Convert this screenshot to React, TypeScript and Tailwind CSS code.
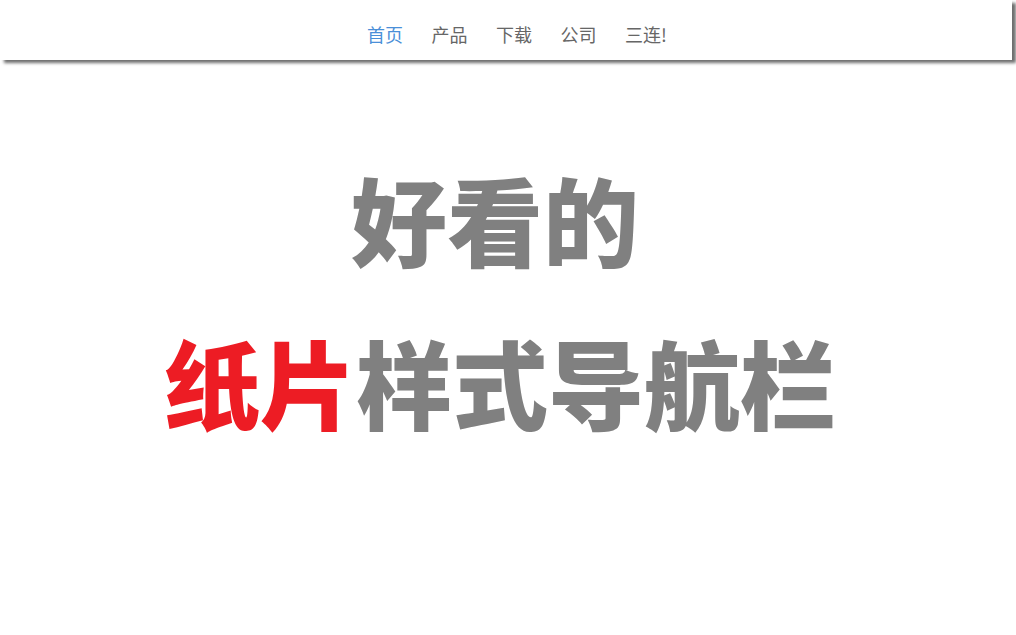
// 纸片样式导航栏 — 首页展示

const NAV_ITEMS = ['首页', '产品', '下载', '公司', '三连!']

function PaperNav() {
  return (
    <nav className="h-[60px] w-[1012px] bg-white shadow-[4px_3px_3px_#6f6f6f] flex items-center justify-center">
      <ul className="flex items-center gap-[28.5px] pl-[22px] pt-[8px]">
        {NAV_ITEMS.map((item, i) => (
          <li
            key={item}
            className={[
              'text-[18px] leading-none',
              i === 0 ? 'text-[#4a8fd8]' : 'text-[#666]',
            ].join(' ')}
          >
            {item}
          </li>
        ))}
      </ul>
    </nav>
  )
}

export default function App() {
  return (
    <div className="min-h-[635px] bg-white font-['Noto_Sans_CJK_SC',sans-serif]">
      <PaperNav />

      {/* ── 标题 ── */}
      <div className="flex flex-col items-center pt-[76px] pr-[12px] font-black text-[96px] leading-[163px] text-[#808080]">
        <h1 className="mr-[14px]">好看的</h1>
        <h1 className="mr-[4px]">
          <span className="text-[#ed1c24]">纸片</span>样式导航栏
        </h1>
      </div>
    </div>
  )
}
